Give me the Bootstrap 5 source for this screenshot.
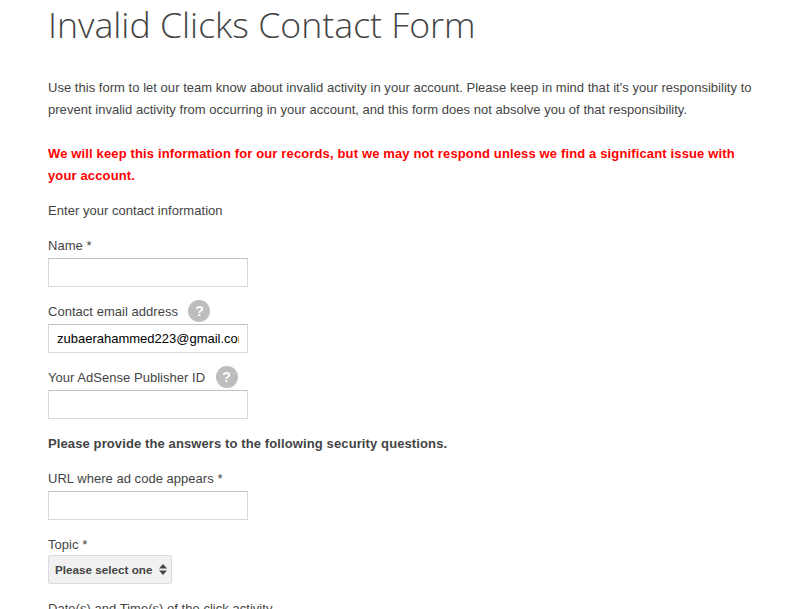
<!DOCTYPE html>
<html lang="en">
<head>
<meta charset="utf-8">
<title>Invalid Clicks Contact Form</title>
<link rel="stylesheet" href="https://cdn.jsdelivr.net/npm/bootstrap@5.3.0/dist/css/bootstrap.min.css">
<style>
html,body{overflow:hidden;height:609px}
body{background:#fff;color:#444;font-family:"Liberation Sans",Arial,sans-serif;font-size:13px;line-height:22px}
.page-wrap{padding:0 0 0 48px;width:793px}
.page-title{font-family:"Open Sans",sans-serif;font-weight:300;font-size:35.66px;line-height:50px;color:#444;margin:-1px 0 28px}
.intro{margin:0 0 22px;width:740px;letter-spacing:.03px}
.warn{margin:0 0 13px;color:#f00;font-weight:700;width:700px;letter-spacing:.14px}
.enter{margin:0 0 13px;letter-spacing:.04px}
.fld{margin:0 0 14px}
.fld label{display:flex;align-items:flex-start;margin:0;height:23px;line-height:22px;letter-spacing:.03px}
.fld label.short-label{height:21px}
.fld input.form-control{width:200px;height:29px;border:1px solid #d9d9d9;border-top-color:#c0c0c0;border-radius:0;padding:1px 8px;font-size:13px;color:#000;font-family:"Liberation Sans",Arial,sans-serif;box-shadow:none}
.helpdot{width:22px;height:22px;border-radius:50%;background:#bdbdbd;color:#fff;font-weight:700;font-size:14px;line-height:22px;text-align:center;margin:-1px 0 0 10.5px;letter-spacing:0}
.secq{font-weight:700;margin:0 0 13px;letter-spacing:.11px}
.sel-btn{width:124px;height:29px;background:#f1f1f1;border:1px solid #dcdcdc;border-radius:2px;font-size:11.7px;font-weight:700;color:#444;padding:0 4px 0 6px;display:flex;align-items:center;justify-content:space-between;white-space:nowrap}
</style>
</head>
<body>
<main class="page-wrap">
<h1 class="page-title">Invalid Clicks Contact Form</h1>
<p class="intro">Use this form to let our team know about invalid activity in your account. Please keep in mind that it's your responsibility to prevent invalid activity from occurring in your account, and this form does not absolve you of that responsibility.</p>
<p class="warn">We will keep this information for our records, but we may not respond unless we find a significant issue with your account.</p>
<p class="enter">Enter your contact information</p>
<form>
<div class="fld"><label for="n">Name *</label><input id="n" class="form-control" type="text"></div>
<div class="fld"><label for="e">Contact email address<span class="helpdot">?</span></label><input id="e" class="form-control" type="text" value="zubaerahammed223@gmail.com"></div>
<div class="fld"><label for="p">Your AdSense Publisher ID<span class="helpdot">?</span></label><input id="p" class="form-control" type="text"></div>
<p class="secq">Please provide the answers to the following security questions.</p>
<div class="fld"><label for="u">URL where ad code appears *</label><input id="u" class="form-control" type="text"></div>
<div class="fld"><label class="short-label">Topic *</label>
<button type="button" class="sel-btn">Please select one
<svg width="8" height="11" viewBox="0 0 8 11"><path d="M4 0L8 4.5H0zM4 11L0 6.500h8z" fill="#444"/></svg></button></div>
<div class="fld"><label>Date(s) and Time(s) of the click activity</label></div>
</form>
</main>
</body>
</html>
